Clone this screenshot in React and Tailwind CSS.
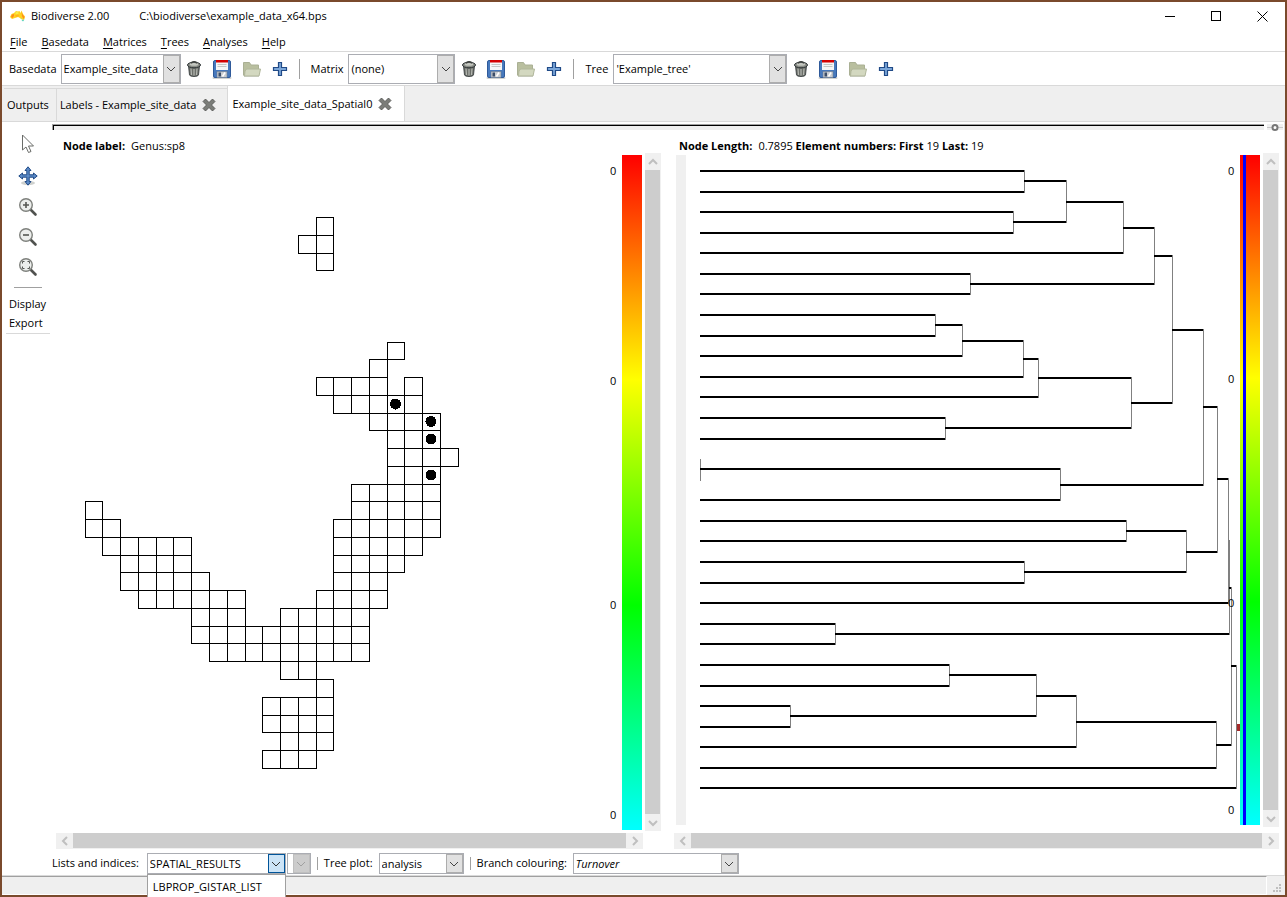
import { useState } from "react";

// pixel positions of the grid lines on the map
const COLS = [29, 46, 64, 82, 100, 117, 135, 153, 171, 189, 206, 224, 242, 260, 277, 295, 313, 331, 348, 366, 384, 402];
const ROWS = [62, 80, 98, 115, 133, 151, 169, 187, 204, 222, 240, 258, 275, 293, 311, 329, 346, 364, 382, 400, 417, 435, 453, 471, 488, 506, 524, 542, 560, 577, 595, 613];

// [row, first column, last column]
const CELL_RUNS = [
    [0, 13, 13], [1, 12, 13], [2, 13, 13],
    [7, 17, 17], [8, 16, 16], [9, 13, 16], [9, 18, 18], [10, 14, 18],
    [11, 16, 19], [12, 17, 19], [13, 17, 20], [14, 17, 19], [15, 15, 19],
    [16, 0, 0], [16, 15, 19], [17, 0, 1], [17, 14, 19],
    [18, 1, 5], [18, 14, 18], [19, 2, 5], [19, 14, 17],
    [20, 2, 6], [20, 14, 16], [21, 3, 8], [21, 13, 16],
    [22, 6, 8], [22, 11, 15], [23, 6, 15], [24, 7, 15],
    [25, 11, 12], [26, 13, 13], [27, 10, 13], [28, 10, 13], [29, 11, 13], [30, 10, 12],
];

const MARKED = [[10, 17], [11, 19], [12, 19], [14, 19]];

// branches: [x1, x2, y]
const BRANCHES = [
    [700, 1024, 171], [700, 1024, 192], [1024, 1066, 181], [700, 1013, 212], [700, 1013, 233],
    [1013, 1066, 222], [1066, 1123, 202], [700, 1123, 253], [1123, 1154, 228], [700, 970, 274],
    [700, 970, 294], [970, 1154, 284], [1154, 1172, 256], [700, 935, 315], [700, 935, 336],
    [935, 962, 325], [700, 962, 356], [962, 1023, 341], [700, 1023, 377], [1023, 1038, 359],
    [700, 1038, 397], [1038, 1131, 378], [700, 945, 418], [700, 945, 439], [945, 1131, 428],
    [1131, 1172, 403], [1172, 1203, 330], [700, 1060, 469], [700, 1060, 500], [1060, 1203, 485],
    [1203, 1217, 407], [700, 1126, 521], [700, 1126, 541], [1126, 1186, 531], [700, 1024, 562],
    [700, 1024, 583], [1024, 1186, 572], [1186, 1217, 552], [1217, 1228, 479], [700, 1228, 603],
    [700, 835, 624], [700, 835, 644], [835, 1229, 634], [1229, 1231, 588], [700, 949, 665],
    [700, 949, 686], [949, 1036, 675], [700, 790, 706], [700, 790, 727], [790, 1036, 716],
    [1036, 1076, 696], [700, 1076, 747], [1076, 1216, 722], [700, 1216, 768], [1216, 1231, 745],
    [1231, 1236, 666], [700, 1236, 788],
];

// joins: [x, y1, y2]
const JOINS = [
    [1024, 171, 192], [1013, 212, 233], [1066, 181, 222], [1123, 202, 253], [970, 274, 294],
    [1154, 228, 284], [935, 315, 336], [962, 325, 356], [1023, 341, 377], [1038, 359, 397],
    [945, 418, 439], [1131, 378, 428], [1172, 256, 403], [700, 460, 480], [1060, 469, 500],
    [1203, 330, 485], [1126, 521, 541], [1024, 562, 583], [1186, 531, 572], [1217, 407, 552],
    [1228, 479, 603], [835, 624, 644], [1229, 541, 634], [949, 665, 686], [790, 706, 727],
    [1036, 675, 716], [1076, 696, 747], [1216, 722, 768], [1231, 588, 745], [1236, 666, 788],
];

function Chevron({ dir = "down", className = "", strokeWidth = 1 }) {
    const paths = {
        down: "M1 3l4 4 4-4",
        up: "M1 7l4-4 4 4",
        left: "M7 1L3 5l4 4",
        right: "M3 1l4 4-4 4",
    };
    return (
        <svg width="10" height="10" viewBox="0 0 10 10" fill="none" stroke="currentColor" strokeWidth={strokeWidth} className={className}>
            <path d={paths[dir]} />
        </svg>
    );
}

function TrashIcon() {
    return (
        <svg width="16" height="18" viewBox="0 0 16 18">
            <path d="M2.500 6l1 9c.5 1 2.500 1.500 4.500 1.500s4-.5 4.500-1.500l1-9z" fill="#6b6e69" stroke="#2e3436" strokeWidth="0.800" />
            <path d="M5 8.500l.5 6.500M8 9v6.500M11 8.500l-.5 6.500" stroke="#b5b8b2" strokeWidth="1.200" />
            <ellipse cx="8" cy="5" rx="6.500" ry="2.800" fill="#8a8d87" stroke="#2e3436" />
            <ellipse cx="8" cy="4.400" rx="4.200" ry="1.400" fill="#c4c7c0" />
            <path d="M5.500 3.500c0-2.500 5-2.500 5 0" fill="none" stroke="#3c3f3c" strokeWidth="1.200" />
        </svg>
    );
}

function SaveIcon() {
    return (
        <svg width="20" height="20" viewBox="0 0 20 20">
            <rect x="0.500" y="18" width="19" height="2" rx="1" fill="#d0d2d0" />
            <rect x="1.500" y="1.500" width="17" height="17" rx="1.500" fill="#4779bd" stroke="#2f5a9a" />
            <rect x="4" y="1" width="12" height="10" fill="#f6f6f6" />
            <rect x="4" y="1" width="12" height="2.500" fill="#d40000" />
            <path d="M5.500 5.500h9M5.500 7.500h9" stroke="#c4c6c4" />
            <rect x="5" y="12.500" width="10" height="6" fill="#c9ccd0" stroke="#6d7c92" strokeWidth="0.600" />
            <rect x="6.500" y="13.500" width="2.500" height="4" fill="#3a4c68" />
            <path d="M10.500 17.500l2.500-4" stroke="#fff" strokeWidth="1.500" />
        </svg>
    );
}

function OpenIcon() {
    return (
        <svg width="20" height="18" viewBox="0 0 20 18">
            <path d="M1.500 15.500v-13h6l1.500 2.500h7.500v4" fill="#b9bf9f" stroke="#aab094" />
            <path d="M4.500 9h14l-1.500 7H2.500l.5-5z" fill="#d3d8c0" stroke="#b0b69a" />
            <path d="M2 16.500h15" stroke="#c5c9ba" />
        </svg>
    );
}

function PlusIcon() {
    return (
        <svg width="16" height="16" viewBox="0 0 16 16">
            <path d="M6.500 1.500h3v5h5v3h-5v5h-3v-5h-5v-3h5z" fill="#7ba6d8" stroke="#204a87" strokeWidth="1.200" />
        </svg>
    );
}

function CloseIcon() {
    return (
        <svg width="14" height="14" viewBox="0 0 14 14">
            <path d="M3.500 1L7 4.500 10.500 1 13 3.500 9.500 7l3.500 3.500-2.500 2.500L7 9.500 3.500 13 1 10.500 4.500 7 1 3.500z" fill="#7b7d79" stroke="#4b4d4a" strokeWidth="0.800" />
        </svg>
    );
}

function LogoIcon() {
    return (
        <svg width="16" height="12" viewBox="0 0 16 12">
            <path d="M0 7l1.500-3L4 3l2-2 2 .5L9.500 1l1 2 1-2.500L13 4l2 2.500-.5 2.500-1.500 1-2-1.500L8 7 5 8l-3 1z" fill="#ffd21f" />
            <path d="M1 7l1-2.500L4 4l0 2-1.500 2z" fill="#ff8c1a" />
            <path d="M5 3l2-1.500L9 3 7 4.500z" fill="#f6ee4a" />
            <path d="M5 5.500l3-1 1.500 1.500L6 7z" fill="#ffb31a" />
            <path d="M11.500 2l1.500 3 1.500 2-1 2-1.500-3z" fill="#ff8a1c" />
            <path d="M11.500 10l3-.5-1.500 2z" fill="#4fd0b4" />
            <path d="M10 8l2 .5-.5 1z" fill="#a5e05a" />
        </svg>
    );
}

function MoveIcon() {
    return (
        <svg width="20" height="20" viewBox="0 0 20 20">
            <ellipse cx="10" cy="17" rx="7" ry="2" fill="#cfd1ce" />
            <path d="M10 .8l3 3.700h-1.800v4.300h4.300V7l3.700 3-3.700 3v-1.800h-4.300v4.300H13l-3 3.700-3-3.700h1.800v-4.300H4.500V13L.8 10l3.700-3v1.800h4.300V4.500H7z" fill="#5b8ac6" stroke="#204a87" />
        </svg>
    );
}

function PointerIcon() {
    return (
        <svg width="14" height="20" viewBox="0 0 14 20">
            <path d="M1.500 1v15l3.500-3 2.500 5.500 2.500-1-2.500-5.500h5z" fill="#fff" stroke="#6a6c69" />
        </svg>
    );
}

function ZoomIcon({ kind }) {
    return (
        <svg width="20" height="20" viewBox="0 0 20 20" fill="none">
            <path d="M12 12l5.500 5.500" stroke="#50524f" strokeWidth="2.600" strokeLinecap="round" />
            <circle cx="8" cy="8" r="6.300" fill="#eceeec" stroke="#7e807c" strokeWidth="1.400" />
            {kind === "in" && <path d="M5 8h6M8 5v6" stroke="#555753" strokeWidth="1.600" />}
            {kind === "out" && <path d="M5 8h6" stroke="#555753" strokeWidth="1.600" />}
            {kind === "fit" && <path d="M4.500 6.500v-2h2M9.500 4.500h2v2M11.500 9.500v2h-2M6.500 11.500h-2v-2" stroke="#555753" />}
        </svg>
    );
}

function Combo({ label, id, value, options = [], className, state = "normal", children }) {
    const [current, setCurrent] = useState(value);
    const arrow = {
        normal: "border-[#adadad] bg-[#e1e1e1] text-[#444]",
        active: "border-[#005499] bg-[#cce4f7] text-[#333]",
        disabled: "border-[#bfbfbf] bg-[#cccccc] text-[#a0a0a0]",
    };
    return (
        <div className={`relative flex shrink-0 border border-[#abadb3] bg-white ${className}`}>
            <select
                id={id}
                aria-label={label}
                value={current}
                disabled={state === "disabled"}
                onChange={(e) => setCurrent(e.target.value)}
                className="h-full w-full appearance-none bg-transparent pl-0.5 pr-4.5 outline-none"
            >
                {[value, ...options].map((o) => (
                    <option key={o}>{o}</option>
                ))}
            </select>
            <span className={`pointer-events-none absolute inset-y-0 right-0 flex w-[17px] items-center justify-center border ${arrow[state]}`}>
                <Chevron />
            </span>
            {children}
        </div>
    );
}

function FileButtons({ name }) {
    return (
        <div className="flex items-center">
            <button aria-label={`Delete ${name}`} className="flex w-[27px] justify-center"><TrashIcon /></button>
            <button aria-label={`Save ${name}`} className="flex w-7 justify-center"><SaveIcon /></button>
            <button aria-label={`Open ${name}`} className="flex w-8 justify-center"><OpenIcon /></button>
            <button aria-label={`New ${name}`} className="flex w-6 justify-center"><PlusIcon /></button>
        </div>
    );
}

function Divider({ className }) {
    return <div className={`w-px shrink-0 bg-[#a0a0a0] ${className}`} />;
}

function HScroll({ className = "" }) {
    return (
        <div className={`flex h-4 shrink-0 bg-[#f0f0f0] pb-px ${className}`}>
            <button aria-label="Scroll left" className="flex w-[17px] items-center justify-center text-[#bfbfbf]"><Chevron dir="left" strokeWidth={2} /></button>
            <div className="flex-1 bg-[#cdcdcd]" />
            <button aria-label="Scroll right" className="flex w-[17px] items-center justify-center text-[#bfbfbf]"><Chevron dir="right" strokeWidth={2} /></button>
        </div>
    );
}

function VScroll() {
    return (
        <div className="flex w-4 shrink-0 flex-col bg-[#f0f0f0] pr-px">
            <button aria-label="Scroll up" className="flex h-[17px] items-center justify-center text-[#bfbfbf]"><Chevron dir="up" strokeWidth={2} /></button>
            <div className="flex-1 bg-[#cdcdcd]" />
            <button aria-label="Scroll down" className="flex h-[17px] items-center justify-center text-[#bfbfbf]"><Chevron strokeWidth={2} /></button>
        </div>
    );
}

function Legend({ marker, labels }) {
    return (
        <svg className="absolute inset-y-0 right-0 h-full w-8">
            <defs>
                <linearGradient id="hue" x1="0" y1="0" x2="0" y2="1">
                    <stop offset="0" stopColor="#ff0000" />
                    <stop offset="0.333" stopColor="#ffff00" />
                    <stop offset="0.667" stopColor="#00ff00" />
                    <stop offset="1" stopColor="#00ffff" />
                </linearGradient>
            </defs>
            <rect x="12" width="20" height="100%" fill="url(#hue)" />
            {marker && <rect x="15" width="3" height="100%" fill="#0000ff" />}
            {labels.map((y) => (
                <text key={y} x="0" y={y} fontSize="11" fill="#000">0</text>
            ))}
        </svg>
    );
}

function SiteMap() {
    const cells = CELL_RUNS.flatMap(([row, from, to]) =>
        COLS.slice(from, to + 1).map((x, i) => ({
            x,
            y: ROWS[row],
            w: COLS[from + i + 1] - x,
            h: ROWS[row + 1] - ROWS[row],
        }))
    );
    return (
        <svg className="absolute inset-0 h-full w-full" shapeRendering="crispEdges">
            {cells.map((c) => (
                <rect key={`${c.x}-${c.y}`} x={c.x + 0.5} y={c.y + 0.5} width={c.w} height={c.h} fill="#fff" stroke="#000" />
            ))}
            {MARKED.map(([r, c]) => (
                <circle key={`${r}-${c}`} cx={(COLS[c] + COLS[c + 1]) / 2} cy={(ROWS[r] + ROWS[r + 1]) / 2} r="5.500" />
            ))}
        </svg>
    );
}

function Dendrogram() {
    return (
        <svg className="absolute inset-0 h-full w-full" shapeRendering="crispEdges">
            <g transform="translate(-686 -155)">
                {JOINS.map(([x, a, b]) => (
                    <line key={`${x}-${a}`} x1={x + 0.5} x2={x + 0.5} y1={a - 1} y2={b + 1} stroke="#808080" />
                ))}
                {BRANCHES.map(([a, b, y]) => (
                    <line key={`${a}-${y}`} x1={a} x2={b} y1={y} y2={y} stroke="#000" strokeWidth="2" />
                ))}
                <rect x="1237" y="724" width="6" height="7" fill="#a52a2a" />
            </g>
        </svg>
    );
}

export default function App() {
    const menus = ["File", "Basedata", "Matrices", "Trees", "Analyses", "Help"];
    return (
        <div className="flex h-screen flex-col border-2 border-[#7a4a2c] bg-white font-['Open_Sans','Noto_Sans',sans-serif] text-[11px] leading-4 text-black">
            <header className="flex h-7 shrink-0 items-center pl-2">
                <LogoIcon />
                <h1 className="ml-[5px]">Biodiverse 2.00</h1>
                <span className="ml-[30px]">C:\biodiverse\example_data_x64.bps</span>
                <div className="ml-auto flex items-center">
                    <button aria-label="Minimize" className="flex w-[46px] justify-center">
                        <svg width="10" height="10"><path d="M0 5.500h10" stroke="#000" /></svg>
                    </button>
                    <button aria-label="Maximize" className="flex w-[46px] justify-center">
                        <svg width="11" height="11"><rect x="0.500" y="0.500" width="9" height="9" fill="none" stroke="#000" /></svg>
                    </button>
                    <button aria-label="Close" className="flex w-[46px] justify-center">
                        <svg width="11" height="11"><path d="M.5.500l10 10M10.500.500l-10 10" stroke="#000" /></svg>
                    </button>
                </div>
            </header>

            <nav className="flex h-[21px] shrink-0 items-center gap-3.5 pl-2 pt-0.5">
                {menus.map((m) => (
                    <button key={m}><span className="underline underline-offset-2">{m[0]}</span>{m.slice(1)}</button>
                ))}
            </nav>

            <div className="flex h-[34px] shrink-0 items-center border-t border-[#d9d9d9] pl-[7px]">
                <label htmlFor="basedata" className="mr-1">Basedata</label>
                <Combo id="basedata" value="Example_site_data" className="h-[30px] w-[120px]" />
                <FileButtons name="basedata" />
                <Divider className="ml-[7px] mr-[11px] h-5" />
                <label htmlFor="matrix" className="mr-[5px]">Matrix</label>
                <Combo id="matrix" value="(none)" className="h-[30px] w-[107px]" />
                <FileButtons name="matrix" />
                <Divider className="ml-[7px] mr-[11px] h-5" />
                <label htmlFor="tree" className="mr-[5px]">Tree</label>
                <Combo id="tree" value="'Example_tree'" className="h-[30px] w-[174px]" />
                <FileButtons name="tree" />
            </div>

            <div role="tablist" className="flex h-[37px] shrink-0 items-end border-y border-[#d9d9d9] bg-[#efefef] pl-0.5">
                <button role="tab" className="h-[33px] border-r border-t border-[#d9d9d9] pl-[3px] pr-[7px]">Outputs</button>
                <button role="tab" className="flex h-[33px] items-center border-t border-[#d9d9d9] pl-[3px] pr-[11px]">
                    Labels - Example_site_data<span className="ml-1.5"><CloseIcon /></span>
                </button>
                <button role="tab" aria-selected="true" className="flex h-[35px] items-center border-x border-[#d9d9d9] bg-white pl-1 pr-3">
                    Example_site_data_Spatial0<span className="ml-1.5"><CloseIcon /></span>
                </button>
            </div>

            <main className="flex min-h-0 flex-1">
                <aside className="flex w-[50px] shrink-0 flex-col items-center pl-0.5 pt-3">
                    <button aria-label="Select" className="mb-3"><PointerIcon /></button>
                    <button aria-label="Pan" className="mb-[11px]"><MoveIcon /></button>
                    <button aria-label="Zoom in" className="mb-2.5"><ZoomIcon kind="in" /></button>
                    <button aria-label="Zoom out" className="mb-2.5"><ZoomIcon kind="out" /></button>
                    <button aria-label="Zoom to fit" className="mb-2.5"><ZoomIcon kind="fit" /></button>
                    <div className="mb-2 h-px w-7 bg-[#a0a0a0]" />
                    <div className="flex w-11 flex-col items-start gap-[3px] border-b border-[#d9d9d9] pb-0.5 pl-[3px]">
                        <button>Display</button>
                        <button>Export</button>
                    </div>
                </aside>

                <div className="flex min-w-0 flex-1 flex-col border-r border-[#d9d9d9] pt-[2px]">
                    <div className="flex h-1.5 shrink-0 gap-[3px] pr-px">
                        <div className="flex-1 border-l border-t border-[#a0a0a0]">
                            <div className="h-full border-l border-t border-black bg-[#f0f0f0]" />
                        </div>
                        <button aria-label="Show settings" className="flex w-4 justify-center bg-[#f0f0f0]">
                            <svg width="16" height="7" fill="none">
                                <path d="M0 3.500h16" stroke="#c8c8c8" />
                                <circle cx="8" cy="3.500" r="2.500" fill="#fff" stroke="#777" strokeWidth="2" />
                            </svg>
                        </button>
                    </div>

                    <div className="flex min-h-0 flex-1 gap-[13px] pl-1 pr-[5px]">
                        <section className="flex min-w-0 flex-1 flex-col">
                            <p className="h-[23px] shrink-0 pl-[7px] pt-2"><b className="mr-1.5">Node label:</b>Genus:sp8</p>
                            <div className="flex min-h-0 flex-1 gap-[3px]">
                                <div className="relative mb-px mt-0.5 flex-1 overflow-hidden">
                                    <SiteMap />
                                    <Legend labels={[20, 230, 454, 664]} />
                                </div>
                                <VScroll />
                            </div>
                            <HScroll className="mr-[18px] mt-0.5" />
                        </section>

                        <section className="flex min-w-0 flex-1 flex-col">
                            <p className="h-[23px] shrink-0 pl-[5px] pt-2">
                                <b className="mr-1.5">Node Length:</b>0.7895 <b>Element numbers: First</b> 19 <b>Last:</b> 19
                            </p>
                            <div className="flex min-h-0 flex-1 gap-[3px] pl-0.5">
                                <div className="my-0.5 -mr-[3px] w-2.5 bg-[#f0f0f0]" />
                                <div className="relative my-0.5 flex-1 overflow-hidden">
                                    <Dendrogram />
                                    <Legend marker labels={[20, 228, 452, 659]} />
                                </div>
                                <VScroll />
                            </div>
                            <HScroll className="mt-1.5" />
                        </section>
                    </div>

                    <div className="mt-1 flex h-[22px] shrink-0 items-start">
                        <label htmlFor="lists" className="mr-2 mt-0.5">Lists and indices:</label>
                        <Combo id="lists" value="SPATIAL_RESULTS" options={["LBPROP_GISTAR_LIST"]} state="active" className="h-[21px] w-[139px]">
                            <ul className="absolute -left-px top-5 z-10 w-[139px] border-x border-t border-[#a0a0a0] bg-white">
                                <li className="h-[22px] pl-[5px] pt-1">LBPROP_GISTAR_LIST</li>
                            </ul>
                        </Combo>
                        <Combo label="Index" value="" state="disabled" className="ml-px h-[21px] w-6" />
                        <Divider className="mx-1.5 mt-1 h-[13px]" />
                        <label htmlFor="plot" className="mr-1.5 mt-0.5">Tree plot:</label>
                        <Combo id="plot" value="analysis" className="h-[21px] w-[85px]" />
                        <Divider className="mx-1.5 mt-1 h-[13px]" />
                        <label htmlFor="colouring" className="mr-1.5 mt-0.5">Branch colouring:</label>
                        <Combo id="colouring" value="Turnover" className="h-[21px] w-[166px] italic" />
                    </div>
                </div>
            </main>

            <footer className="flex h-5 shrink-0 border-t border-[#d9d9d9] bg-[#efefef]">
                <div className="flex-1 border-b border-r border-t border-b-white border-r-white border-t-[#a0a0a0]" />
                <svg width="18" height="18" fill="#bfbfbf">
                    <path d="M12 8h2v2h-2zM9 11h2v2H9zM12 11h2v2h-2zM6 14h2v2H6zM9 14h2v2H9zM12 14h2v2h-2z" />
                </svg>
            </footer>
        </div>
    );
}
